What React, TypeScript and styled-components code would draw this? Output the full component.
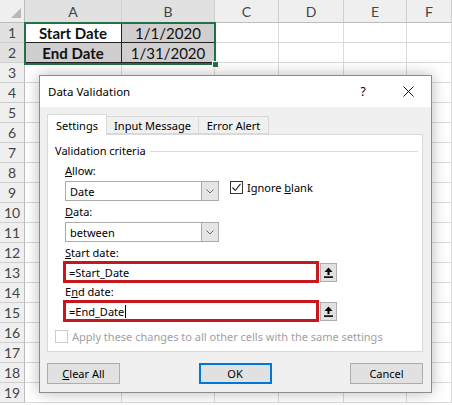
import React, { FC, ReactNode } from "react";
import styled, { createGlobalStyle } from "styled-components";

// Global
const GlobalStyle = createGlobalStyle`
  html, body {
    margin: 0;
    padding: 0;
    background: #ffffff;
  }
`;

// Sheet styles
const Page = styled.div`
  position: relative;
  width: 452px;
  height: 405px;
  overflow: hidden;
  background: #ffffff;
`;

const Sheet = styled.div`
  display: grid;
  grid-template-columns: 25px 97px 93px 64px 65px 63px 45px;
  grid-template-rows: 23px repeat(19, 20px);
  font-family: Lato, "Liberation Sans", sans-serif;
`;

const Corner = styled.div`
  display: flex;
  align-items: flex-end;
  justify-content: flex-end;
  padding: 0 3px 4px 0;
  box-sizing: border-box;
  background: #efefef;
  border-right: 1px solid #bdbdbd;
  border-bottom: 1px solid #bdbdbd;

  &::after {
    content: "";
    width: 0;
    height: 0;
    border-left: 10px solid transparent;
    border-bottom: 10px solid #b8b8b8;
  }
`;

const ColHeader = styled.div<{ $selected?: boolean }>`
  display: flex;
  align-items: center;
  justify-content: center;
  box-sizing: border-box;
  background: ${({ $selected }) => ($selected ? "#e1e1e1" : "#efefef")};
  border-right: 1px solid #cfcfcf;
  border-bottom: 1px solid #bdbdbd;
  color: #444444;
  font-size: 14px;
`;

const RowHeader = styled.div<{ $selected?: boolean }>`
  display: flex;
  align-items: center;
  justify-content: center;
  box-sizing: border-box;
  background: ${({ $selected }) => ($selected ? "#e1e1e1" : "#efefef")};
  border-right: 1px solid #bdbdbd;
  border-bottom: 1px solid #cfcfcf;
  color: #444444;
  font-size: 14px;
`;

const Cell = styled.div<{ $fill?: string; $bold?: boolean; $boxed?: boolean }>`
  display: flex;
  align-items: center;
  justify-content: center;
  box-sizing: border-box;
  background: ${({ $fill }) => $fill || "#ffffff"};
  border-right: 1px solid ${({ $boxed }) => ($boxed ? "#222222" : "#dadada")};
  border-bottom: 1px solid ${({ $boxed }) => ($boxed ? "#222222" : "#dadada")};
  color: #111111;
  font-size: 15px;
  font-weight: ${({ $bold }) => ($bold ? 700 : 400)};
`;

const Selection = styled.div`
  position: absolute;
  left: 24px;
  top: 22px;
  width: 192px;
  height: 43px;
  box-sizing: border-box;
  border: 2px solid #217346;
  pointer-events: none;
`;

const FillHandle = styled.span`
  position: absolute;
  right: -5px;
  bottom: -5px;
  width: 5px;
  height: 5px;
  background: #217346;
  border: 1px solid #ffffff;
`;

// Dialog styles
const Dialog = styled.div`
  position: absolute;
  left: 39px;
  top: 75px;
  width: 393px;
  height: 318px;
  box-sizing: border-box;
  display: flex;
  flex-direction: column;
  background: #f0f0f0;
  border: 1px solid #8c8c8c;
  box-shadow: 0 0 14px rgba(0, 0, 0, 0.28);
  font-family: "Noto Sans", "Open Sans", sans-serif;
  font-size: 11px;
  color: #000000;
`;

const TitleBar = styled.div`
  display: flex;
  align-items: center;
  height: 31px;
  background: #ffffff;
  padding-left: 8px;
`;

const Title = styled.span`
  flex: 1;
  font-size: 11.5px;
`;

const TitleButton = styled.span<{ $width: number; $gap?: number }>`
  display: flex;
  align-items: center;
  justify-content: center;
  width: ${({ $width }) => $width}px;
  height: 31px;
  margin-left: ${({ $gap }) => $gap || 0}px;
  font-size: 12px;
`;

const Body = styled.div`
  display: flex;
  flex-direction: column;
  padding: 7px 8px 0 7px;
`;

const TabRow = styled.div`
  display: flex;
  align-items: flex-end;
  height: 20px;
`;

const Tab = styled.div<{ $active?: boolean; $width: number }>`
  position: relative;
  z-index: ${({ $active }) => ($active ? 1 : 0)};
  display: flex;
  align-items: center;
  justify-content: center;
  box-sizing: border-box;
  width: ${({ $width }) => $width}px;
  height: ${({ $active }) => ($active ? "21px" : "18px")};
  margin-bottom: ${({ $active }) => ($active ? "-1px" : "0")};
  background: ${({ $active }) => ($active ? "#ffffff" : "#f0f0f0")};
  border: 1px solid #d9d9d9;
  border-bottom: ${({ $active }) => ($active ? "none" : "1px solid #d9d9d9")};
  margin-left: ${({ $active }) => ($active ? "0" : "-1px")};
`;

const Panel = styled.div`
  display: flex;
  flex-direction: column;
  height: 218px;
  box-sizing: border-box;
  background: #ffffff;
  border: 1px solid #d9d9d9;
  padding: 8px 4px 0 7px;
`;

const GroupHeader = styled.div`
  display: flex;
  align-items: center;
  gap: 4px;
  line-height: 16px;

  &::after {
    content: "";
    flex: 1;
    height: 1px;
    background: #dcdcdc;
  }
`;

const Fields = styled.div`
  display: flex;
  flex-direction: column;
  padding-left: 10px;
`;

const FieldLabel = styled.label<{ $gap: number }>`
  display: block;
  line-height: 16px;
  margin-top: ${({ $gap }) => $gap}px;
`;

const ComboRow = styled.div`
  display: flex;
  align-items: flex-start;
  margin-top: 2px;
`;

const Combo = styled.div`
  display: flex;
  width: 154px;
  height: 20px;
  box-sizing: border-box;
  border: 1px solid #ababab;
  background: #ffffff;
`;

const ComboValue = styled.span`
  flex: 1;
  display: flex;
  align-items: center;
  padding-left: 4px;
`;

const ComboButton = styled.span`
  display: flex;
  align-items: center;
  justify-content: center;
  width: 16px;
  background: #e5e5e5;
  border-left: 1px solid #ababab;
`;

const CheckLabel = styled.label<{ $disabled?: boolean; $gap?: number }>`
  display: flex;
  align-items: center;
  gap: 4px;
  margin-left: ${({ $gap }) => $gap || 0}px;
  line-height: 13px;
  color: ${({ $disabled }) => ($disabled ? "#a0a0a0" : "#000000")};
`;

const CheckBox = styled.span<{ $disabled?: boolean }>`
  display: flex;
  align-items: center;
  justify-content: center;
  width: 13px;
  height: 13px;
  box-sizing: border-box;
  border: 1px solid ${({ $disabled }) => ($disabled ? "#cccccc" : "#333333")};
  background: #ffffff;
`;

const RefRow = styled.div`
  display: flex;
  align-items: center;
  margin-left: -2px;
`;

const RefInput = styled.div`
  display: flex;
  align-items: center;
  width: 256px;
  height: 22px;
  box-sizing: border-box;
  border: 3px solid #c8161d;
  background: #ffffff;
  padding-left: 3px;
`;

const Caret = styled.span`
  width: 1px;
  height: 13px;
  margin-left: 1px;
  background: #000000;
`;

const RefButton = styled.span`
  display: flex;
  align-items: center;
  justify-content: center;
  width: 17px;
  height: 19px;
  margin-left: 1px;
  box-sizing: border-box;
  background: #e1e1e1;
  border: 1px solid #adadad;
`;

const ApplyRow = styled.div`
  margin-top: 8px;
`;

const ButtonRow = styled.div`
  display: flex;
  margin-top: 11px;
`;

const Button = styled.button<{ $primary?: boolean; $push?: boolean }>`
  width: 73px;
  height: 21px;
  box-sizing: border-box;
  margin-left: ${({ $push }) => ($push ? "auto" : "0")};
  padding: 0;
  background: #e1e1e1;
  border: ${({ $primary }) => ($primary ? "2px solid #0078d7" : "1px solid #adadad")};
  font-family: inherit;
  font-size: 11px;
  color: #000000;

  & + & {
    margin-left: ${({ $push }) => ($push ? "auto" : "11px")};
  }
`;

// Icons
const Chevron: FC = () => (
  <svg width="8" height="5" viewBox="0 0 8 5">
    <path d="M0.5 0.5 L4 4 L7.5 0.5" stroke="#6a6a6a" fill="none" />
  </svg>
);

const Check: FC = () => (
  <svg width="11" height="11" viewBox="0 0 11 11">
    <path d="M1.5 5.5 L4.3 8.5 L9.5 1.8" stroke="#222222" strokeWidth="1.1" fill="none" />
  </svg>
);

const Collapse: FC = () => (
  <svg width="9" height="11" viewBox="0 0 9 11">
    <path d="M4.5 0.5 L8.5 5 L0.5 5 Z" fill="#000000" />
    <rect x="3.5" y="5" width="2" height="3" fill="#000000" />
    <rect x="0" y="9.3" width="9" height="1.6" fill="#000000" />
  </svg>
);

const CloseIcon: FC = () => (
  <svg width="11" height="11" viewBox="0 0 11 11">
    <path d="M0.5 0.5 L10.5 10.5 M10.5 0.5 L0.5 10.5" stroke="#111111" strokeWidth="1" />
  </svg>
);

// Data
const columns = ["A", "B", "C", "D", "E", "F"];

interface ICellData {
  text: string;
  bold?: boolean;
  fill?: string;
}

const tableData: ICellData[][] = [
  [
    { text: "Start Date", bold: true },
    { text: "1/1/2020", fill: "#d0cece" },
  ],
  [
    { text: "End Date", bold: true, fill: "#d0cece" },
    { text: "1/31/2020", fill: "#d0cece" },
  ],
];

const Field: FC<{ label: ReactNode; gap: number; children: ReactNode }> = ({ label, gap, children }) => (
  <>
    <FieldLabel $gap={gap}>{label}</FieldLabel>
    {children}
  </>
);

const App: FC = () => {
  const rows = Array.from({ length: 19 }, (_, i) => i + 1);

  return (
    <Page>
      <GlobalStyle />
      <Sheet>
        <Corner />
        {columns.map((c, i) => (
          <ColHeader key={c} $selected={i < 2}>
            {c}
          </ColHeader>
        ))}
        {rows.map((r) => (
          <React.Fragment key={r}>
            <RowHeader $selected={r <= 2}>{r}</RowHeader>
            {columns.map((c, ci) => {
              const data = r <= 2 && ci < 2 ? tableData[r - 1][ci] : undefined;
              return (
                <Cell key={c} $fill={data?.fill} $bold={data?.bold} $boxed={!!data}>
                  {data?.text}
                </Cell>
              );
            })}
          </React.Fragment>
        ))}
      </Sheet>

      <Selection>
        <FillHandle />
      </Selection>

      <Dialog>
        <TitleBar>
          <Title>Data Validation</Title>
          <TitleButton $width={30}>?</TitleButton>
          <TitleButton $width={46} $gap={7}>
            <CloseIcon />
          </TitleButton>
        </TitleBar>

        <Body>
          <TabRow>
            <Tab $active $width={60}>
              Settings
            </Tab>
            <Tab $width={93}>Input Message</Tab>
            <Tab $width={71}>Error Alert</Tab>
          </TabRow>

          <Panel>
            <GroupHeader>Validation criteria</GroupHeader>
            <Fields>
              <Field
                gap={4}
                label={
                  <>
                    <u>A</u>llow:
                  </>
                }
              >
                <ComboRow>
                  <Combo>
                    <ComboValue>Date</ComboValue>
                    <ComboButton>
                      <Chevron />
                    </ComboButton>
                  </Combo>
                  <CheckLabel $gap={11}>
                    <CheckBox>
                      <Check />
                    </CheckBox>
                    <span>
                      Ignore <u>b</u>lank
                    </span>
                  </CheckLabel>
                </ComboRow>
              </Field>

              <Field
                gap={3}
                label={
                  <>
                    <u>D</u>ata:
                  </>
                }
              >
                <ComboRow>
                  <Combo>
                    <ComboValue>between</ComboValue>
                    <ComboButton>
                      <Chevron />
                    </ComboButton>
                  </Combo>
                </ComboRow>
              </Field>

              <Field
                gap={3}
                label={
                  <>
                    <u>S</u>tart date:
                  </>
                }
              >
                <RefRow>
                  <RefInput>=Start_Date</RefInput>
                  <RefButton>
                    <Collapse />
                  </RefButton>
                </RefRow>
              </Field>

              <Field
                gap={1}
                label={
                  <>
                    E<u>n</u>d date:
                  </>
                }
              >
                <RefRow>
                  <RefInput>
                    =End_Date
                    <Caret />
                  </RefInput>
                  <RefButton>
                    <Collapse />
                  </RefButton>
                </RefRow>
              </Field>
            </Fields>

            <ApplyRow>
              <CheckLabel $disabled>
                <CheckBox $disabled />
                <span>Apply these changes to all other cells with the same settings</span>
              </CheckLabel>
            </ApplyRow>
          </Panel>

          <ButtonRow>
            <Button>
              <u>C</u>lear All
            </Button>
            <Button $primary $push>
              OK
            </Button>
            <Button>Cancel</Button>
          </ButtonRow>
        </Body>
      </Dialog>
    </Page>
  );
};

export default App;
